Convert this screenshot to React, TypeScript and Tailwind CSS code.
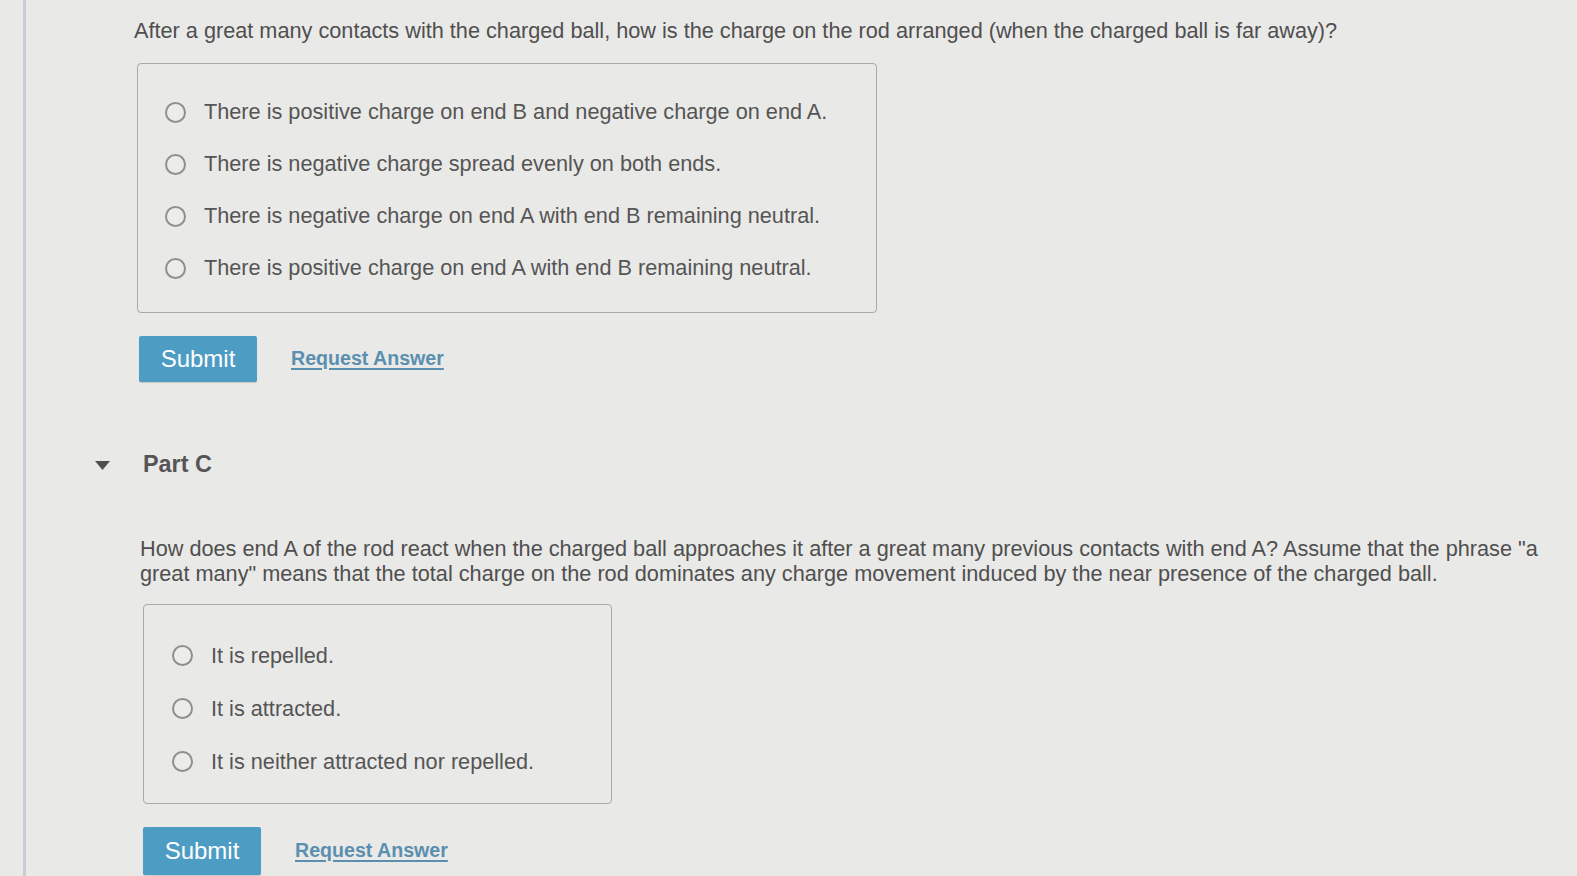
import React from "react";

function Radio() {
  return <span className="inline-block w-[21px] h-[21px] rounded-full border-2 border-[#8f8f8f] bg-[#ececea] shrink-0" />;
}

function Option({ text, h = 52 }: { text: string; h?: number }) {
  return (
    <div className="flex items-center gap-[18px]" style={{ height: h }}>
      <Radio />
      <span className="text-[21.7px] leading-[24px] text-[#555555]">{text}</span>
    </div>
  );
}

function Actions({ h = 46 }: { h?: number }) {
  return (
    <div className="flex items-center gap-[34px]">
      <button
        className="w-[118px] bg-[#4d9cc4] rounded-[2px] text-white text-[24px] leading-none shadow-[0_1px_1px_rgba(0,0,0,0.15)]"
        style={{ height: h }}
      >
        Submit
      </button>
      <a className="text-[19.6px] font-bold text-[#5a8fb0] underline underline-offset-[3px] decoration-[1.5px]">Request Answer</a>
    </div>
  );
}

export default function App() {
  return (
    <div className="min-h-[876px] h-[876px] overflow-hidden bg-[#e9e9e7] flex font-['Liberation_Sans',Arial,sans-serif]">
      <div className="w-[23px] shrink-0" />
      <div className="w-[3px] shrink-0 bg-[#c8cdd3]" />
      <div className="flex-1 pl-[108px] pt-[19px]">
        <p className="text-[21.7px] leading-[24px] text-[#4f4f4f]">
          After a great many contacts with the charged ball, how is the charge on the rod arranged (when the charged ball is far away)?
        </p>
        <div className="mt-[20px] ml-[3px] w-[740px] h-[250px] border border-[#a9a9a9] rounded-[4px] pt-[22px] pl-[27px]">
          <Option text="There is positive charge on end B and negative charge on end A." />
          <Option text="There is negative charge spread evenly on both ends." />
          <Option text="There is negative charge on end A with end B remaining neutral." />
          <Option text="There is positive charge on end A with end B remaining neutral." />
        </div>
        <div className="mt-[23px] ml-[5px]">
          <Actions />
        </div>

        <div className="mt-[68px] -ml-[39px] h-[30px] flex items-center gap-[33px]">
          <svg width="15" height="9" viewBox="0 0 15 9">
            <polygon points="0,0 15,0 7.5,9" fill="#4f4f4f" />
          </svg>
          <span className="text-[23.4px] font-bold text-[#555555]">Part C</span>
        </div>

        <p className="mt-[56px] ml-[6px] text-[21.7px] leading-[25px] text-[#4f4f4f]">
          How does end A of the rod react when the charged ball approaches it after a great many previous contacts with end A? Assume that the phrase "a
          <br />
          great many" means that the total charge on the rod dominates any charge movement induced by the near presence of the charged ball.
        </p>
        <div className="mt-[18px] ml-[9px] w-[469px] h-[200px] border border-[#a9a9a9] rounded-[4px] pt-[24px] pl-[28px]">
          <Option text="It is repelled." h={53} />
          <Option text="It is attracted." h={53} />
          <Option text="It is neither attracted nor repelled." h={53} />
        </div>
        <div className="mt-[23px] ml-[9px]">
          <Actions h={48} />
        </div>
      </div>
    </div>
  );
}
